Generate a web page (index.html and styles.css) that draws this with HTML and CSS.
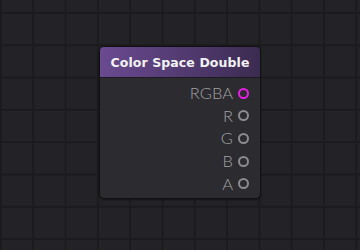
FILE: index.html
```html
<!DOCTYPE html>
<html>
<head>
<meta charset="utf-8">
<link rel="stylesheet" href="styles.css">
</head>
<body>
<div class="canvas">
  <div class="node">
    <div class="node-header">Color Space Double</div>
    <div class="node-body">
      <div class="port"><span class="port-label">RGBA</span><span class="pin pin-rgba"></span></div>
      <div class="port"><span class="port-label">R</span><span class="pin"></span></div>
      <div class="port"><span class="port-label">G</span><span class="pin"></span></div>
      <div class="port"><span class="port-label">B</span><span class="pin"></span></div>
      <div class="port"><span class="port-label">A</span><span class="pin"></span></div>
    </div>
  </div>
</div>
</body>
</html>
```
FILE: styles.css
```css
html, body {
  margin: 0;
  padding: 0;
}
body {
  width: 360px;
  height: 250px;
  overflow: hidden;
  background-color: #232327;
  font-family: "DejaVu Sans", sans-serif;
}
.canvas {
  width: 360px;
  height: 250px;
  background-color: #232327;
  background-image:
    linear-gradient(to right, #1b1b1e 0, #1b1b1e 2px, transparent 2px),
    linear-gradient(to bottom, #1b1b1e 0, #1b1b1e 2px, transparent 2px);
  background-size: 32.3px 32.3px;
  background-position: 0px 12px;
  padding: 46px 0 0 99px;
  box-sizing: border-box;
}
.node {
  width: 162px;
  height: 153px;
  box-sizing: border-box;
  border: 1px solid #111113;
  border-radius: 5px;
  background: #2b2b30;
  overflow: hidden;
  box-shadow: 0 1px 2px rgba(0,0,0,0.4);
}
.node-header {
  height: 30px;
  background: linear-gradient(to right, #6a4a90, #4a3566 70%, #3b2b50);
  color: #f2f2f2;
  font-weight: bold;
  font-size: 12.5px;
  display: flex;
  align-items: center;
  justify-content: center;
  border-bottom: 1px solid #1c1c20;
  letter-spacing: 0.1px;
}
.node-body {
  display: flex;
  flex-direction: column;
  padding: 4px 11px 0 0;
}
.port {
  height: 22.6px;
  display: flex;
  align-items: center;
  justify-content: flex-end;
  gap: 5px;
}
.port-label {
  font-family: "Lato", sans-serif;
  font-weight: 300;
  font-size: 16.5px;
  color: #a0a0a2;
}
.pin {
  width: 11px;
  height: 11px;
  box-sizing: border-box;
  border: 2.5px solid #8c8c8e;
  border-radius: 50%;
}
.pin-rgba {
  border-color: #e81ee6;
}
```
